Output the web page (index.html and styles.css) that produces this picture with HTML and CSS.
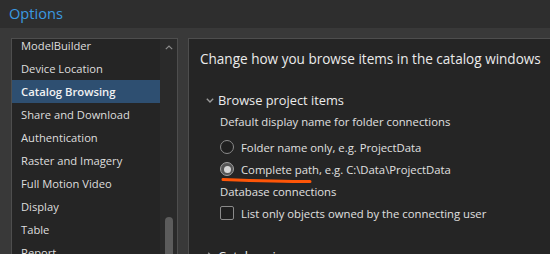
FILE: index.html
```html
<!DOCTYPE html>
<html>
<head>
<meta charset="utf-8">
<link rel="stylesheet" href="styles.css">
</head>
<body>
<div class="app">
  <div class="titlebar">Options</div>
  <div class="main">
    <div class="left">
      <ul class="list">
        <li>ModelBuilder</li>
        <li>Device Location</li>
        <li class="sel">Catalog Browsing</li>
        <li>Share and Download</li>
        <li>Authentication</li>
        <li>Raster and Imagery</li>
        <li>Full Motion Video</li>
        <li>Display</li>
        <li>Table</li>
        <li>Report</li>
      </ul>
      <div class="scroll">
        <svg class="up" width="8" height="5" viewBox="0 0 8 5"><path d="M0.8 4.2 L4 1 L7.2 4.2" fill="none" stroke="#8c8c8c" stroke-width="1.2"/></svg>
        <div class="thumb"></div>
      </div>
    </div>
    <div class="right">
      <div class="heading">Change how you browse items in the catalog windows</div>
      <div class="sechead first"><svg class="chev" width="8" height="5" viewBox="0 0 8 5"><path d="M0.8 0.8 L4 4 L7.2 0.8" fill="none" stroke="#9a9a9a" stroke-width="1.4"/></svg><span>Browse project items</span></div>
      <div class="body">
        <div class="label">Default display name for folder connections</div>
        <div class="opt o1"><span class="radio"></span><span>Folder name only, e.g. ProjectData</span></div>
        <div class="opt marked"><span class="radio on"></span><span>Complete path, e.g. C:\Data\ProjectData</span>
          <svg class="mark" width="94" height="8" viewBox="0 0 94 8"><path d="M2 2.5 C30 3.5, 62 4.5, 89 4.5" fill="none" stroke="#ff5608" stroke-width="3" stroke-linecap="round"/></svg>
        </div>
        <div class="label db">Database connections</div>
        <div class="opt"><span class="check"></span><span>List only objects owned by the connecting user</span></div>
      </div>
      <div class="sechead next"><svg class="chev" width="8" height="8" viewBox="0 0 8 8"><path d="M2.2 0.8 L5.4 4 L2.2 7.2" fill="none" stroke="#9a9a9a" stroke-width="1.4"/></svg><span>Catalog view</span></div>
    </div>
  </div>
</div>
</body>
</html>
```
FILE: styles.css
```css
html, body {
  margin: 0;
  padding: 0;
}
body {
  width: 550px;
  height: 254px;
  overflow: hidden;
  background: #393939;
  font-family: "Open Sans", "Noto Sans", sans-serif;
  color: #e0e0e0;
}
.app {
  width: 550px;
  height: 254px;
  display: flex;
  flex-direction: column;
}
.titlebar {
  height: 28px;
  background: #2e2e2e;
  color: #3b9ae1;
  font-size: 14.6px;
  line-height: 27px;
  padding-left: 9px;
}
.main {
  flex: 1;
  display: flex;
  gap: 10px;
  padding: 10px 0 0 11px;
  min-height: 0;
}
.left {
  width: 165px;
  border: 1px solid #4e4e4e;
  border-bottom: none;
  background: #252525;
  display: flex;
  overflow: hidden;
}
.list {
  list-style: none;
  margin: -5px 0 0 0;
  padding: 0;
  width: 148px;
}
.list li {
  height: 23px;
  line-height: 23px;
  padding-left: 9px;
  font-size: 11.2px;
  color: #dedede;
  white-space: nowrap;
}
.list li.sel {
  background: #2e4f71;
  font-weight: 600;
  font-size: 11.3px;
  color: #f2f2f2;
}
.scroll {
  flex: 1;
  background: #2a2a2a;
  display: flex;
  flex-direction: column;
  align-items: center;
}
.up {
  margin-top: 6px;
}
.thumb {
  margin-top: 167px;
  width: 8px;
  flex: 1;
  background: #5c5c5c;
  border-radius: 4px 4px 0 0;
}
.right {
  flex: 1;
  border: 1px solid #4e4e4e;
  border-right: none;
  border-bottom: none;
  background: #252525;
  padding: 10px 0 0 11px;
  overflow: hidden;
}
.heading {
  font-size: 13.56px;
  line-height: 20px;
  color: #ebebeb;
  white-space: nowrap;
}
.sechead {
  display: flex;
  align-items: center;
  font-size: 12.8px;
  color: #ebebeb;
  height: 20px;
}
.sechead.first {
  margin-top: 21px;
}
.chev {
  margin: 0 4px 0 6px;
  flex: none;
}
.body {
  padding-left: 20px;
  font-size: 11.3px;
}
.label {
  height: 22px;
  line-height: 22px;
  margin-top: 1px;
  white-space: nowrap;
}
.label.db {
  height: 21px;
  line-height: 21px;
  margin-top: 1px;
}
.opt {
  display: flex;
  align-items: center;
  gap: 7px;
  height: 22px;
  position: relative;
  white-space: nowrap;
}
.opt.o1 {
  margin-top: 3px;
}
.radio {
  width: 12px;
  height: 12px;
  border: 1px solid #8a8a8a;
  border-radius: 50%;
  background: #1f1f1f;
  position: relative;
  flex: none;
}
.radio.on {
  background: #555555;
  border-color: #a0a0a0;
}
.radio.on::after {
  content: "";
  position: absolute;
  left: 2.5px;
  top: 2.5px;
  width: 7px;
  height: 7px;
  border-radius: 50%;
  background: #d6d6d6;
}
.check {
  width: 12px;
  height: 12px;
  border: 1px solid #8a8a8a;
  border-radius: 2px;
  background: #1f1f1f;
  flex: none;
}
.mark {
  position: absolute;
  left: 1px;
  top: 19px;
}
.sechead.next {
  margin-top: 22px;
}
```
